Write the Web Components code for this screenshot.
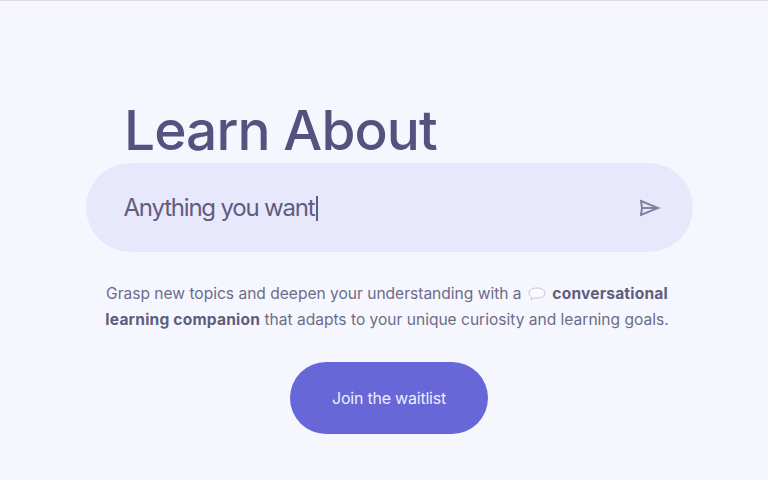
<!DOCTYPE html>
<html lang="en"><head><meta charset="utf-8"><title>Learn About</title>
<style>html,body{margin:0;height:100%;background:#f6f7fe}body{font-family:Inter,"Liberation Sans",sans-serif;overflow:hidden}</style>
</head><body>
<landing-page>
  <hero-title slot="title">Learn About</hero-title>
  <prompt-bar slot="prompt">Anything you want</prompt-bar>
  <intro-text slot="intro">Grasp new topics and deepen your understanding with a <chat-bubble></chat-bubble> <b>conversational learning companion</b> that adapts to your unique curiosity and learning goals.</intro-text>
  <cta-button slot="cta">Join the waitlist</cta-button>
</landing-page>
<script>
function def(name, html){
  customElements.define(name, class extends HTMLElement{
    constructor(){super();this.attachShadow({mode:'open'}).innerHTML=html;}
  });
}
def('landing-page',`<style>
:host{display:flex;flex-direction:column;box-sizing:border-box;height:480px;border-top:1px solid #dcdcde;padding:96px 75px 0 86px;background:#f6f7fe}
.t{display:block;padding-left:38px}
.i{display:flex;justify-content:center;margin-top:29px;padding-right:5px}
.c{display:flex;justify-content:center;margin-top:29px;padding-right:1px}
</style>
<div class="t"><slot name="title"></slot></div>
<slot name="prompt"></slot>
<div class="i"><slot name="intro"></slot></div>
<div class="c"><slot name="cta"></slot></div>`);
def('hero-title',`<style>:host{display:block;font:550 55px/66px Inter,"Liberation Sans",sans-serif;color:#565280;letter-spacing:-.92px}</style><slot></slot>`);
def('prompt-bar',`<style>
:host{display:flex;align-items:center;justify-content:space-between;box-sizing:border-box;height:89px;border-radius:45px;background:#e8e8fd;padding:0 32px 0 37.500px;font:400 24px/30px Inter,"Liberation Sans",sans-serif;color:#5f5c80;letter-spacing:-1.2px}
.caret{display:inline-block;width:2px;height:25px;background:#5f5c80;margin-left:2px;vertical-align:-5px}
svg{display:block;width:22px;height:18px}
</style>
<span><slot></slot><span class="caret"></span></span>
<svg viewBox="0 0 22 18" fill="none" stroke="#82829f" stroke-width="2" stroke-linejoin="miter"><path d="M2 2 L19 9 L2 16 L3 9 Z M3 9 H19"/></svg>`);
def('intro-text',`<style>
:host{display:block;width:580px;text-align:center;font:400 15.550px/26px Inter,"Liberation Sans",sans-serif;color:#6d6c88}
::slotted(b){font-weight:700;color:#5f5d7e;letter-spacing:.2px}
</style><slot></slot>`);
def('chat-bubble',`<style>:host{display:inline-block;width:18px;height:14px;margin:0 2px;vertical-align:-2px}svg{display:block;width:18px;height:14px}</style>
<svg viewBox="0 0 18 14" fill="#fbfbff" stroke="#c4c4d2" stroke-width="1"><path d="M9 1C4.500 1 1 3 1 6.200c0 1.700 1 3 2.600 3.900L3 13l3.600-2.100c.8.1 1.600.2 2.400.2 4.500 0 8-2 8-4.900C17 3 13.500 1 9 1Z"/></svg>`);
def('cta-button',`<style>:host{display:flex;align-items:center;justify-content:center;width:198px;height:72px;border-radius:36px;background:#6767d8;color:#eeeefc;font:400 16px/20px Inter,"Liberation Sans",sans-serif;letter-spacing:-.22px}</style><slot></slot>`);
</script>
</body></html>
